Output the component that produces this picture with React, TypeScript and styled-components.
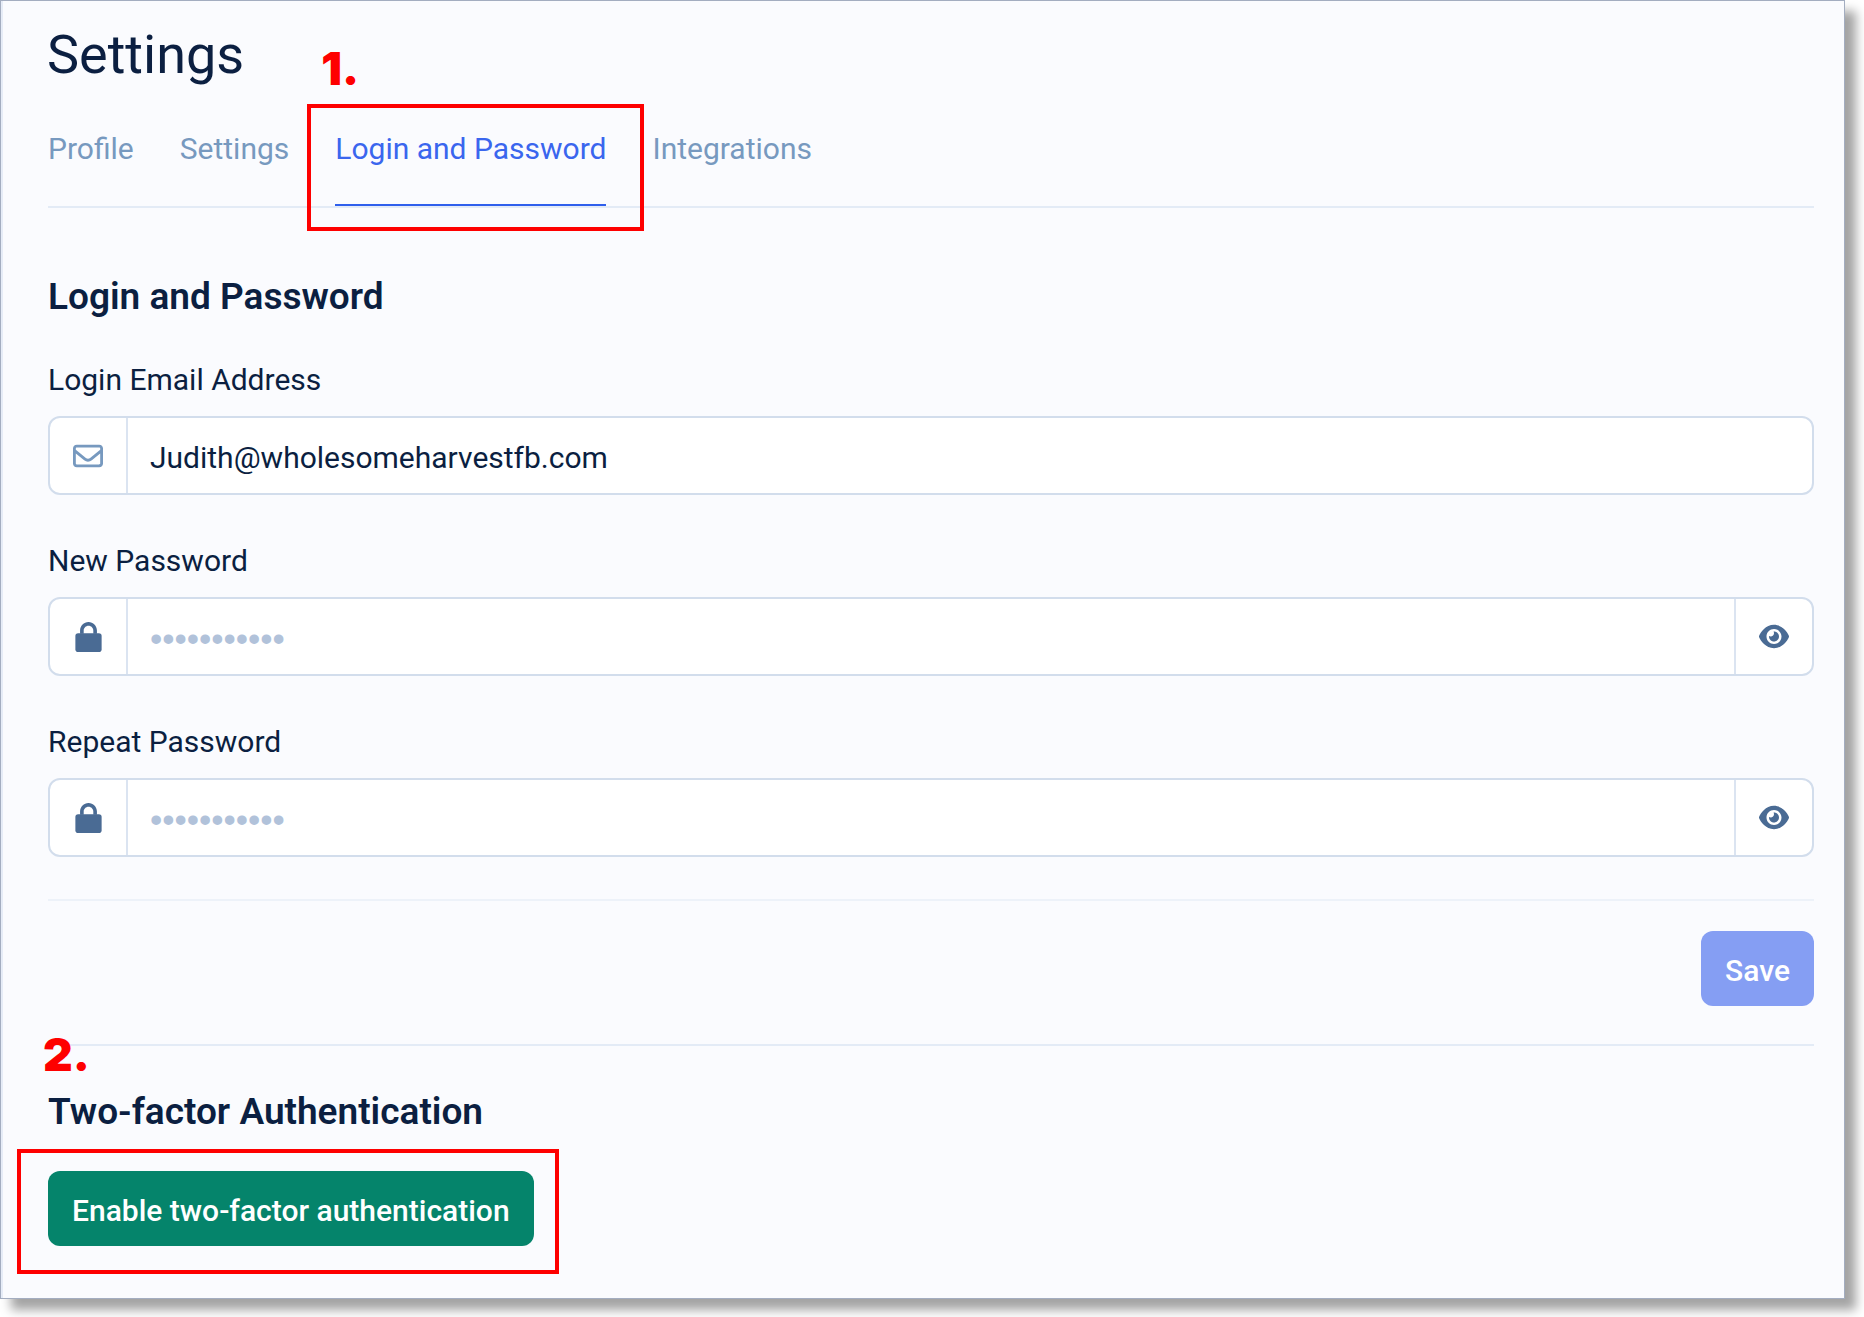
import React from 'react';
import styled, { createGlobalStyle } from 'styled-components';
import { FaRegEnvelope } from 'react-icons/fa6';

const GlobalStyle = createGlobalStyle`
  * { box-sizing: border-box; }
  body {
    margin: 0;
    background: #fff;
    color: #0b1f41;
    font-family: Roboto, "Liberation Sans", sans-serif;
    font-size: 30px;
    line-height: 36px;
  }
  h1, h2, p { margin: 0; }
  button, input { font: inherit; }
`;

const Card = styled.main`
  margin: 0 19px 19px 0;
  padding: 24px 30px 52px 44px;
  border: 1px solid #a3adc0;
  background: #fafbfe;
  box-shadow: inset 2px 0 0 #e6ecf7, 11px 11px 10px rgba(0, 0, 0, 0.36);
`;

const PageTitle = styled.h1`
  padding: 0 2px;
  font-size: 54px;
  line-height: 60px;
  font-weight: 400;
`;

const Tabs = styled.nav`
  display: flex;
  gap: 46px;
  margin-left: 3px;
  padding-top: 46px;
  border-bottom: 2px solid #e3ebf6;
`;

const Tab = styled.a<{ $active?: boolean }>`
  position: relative;
  height: 75px;
  color: ${(p) => (p.$active ? '#3a66ee' : '#7799bf')};
  border-bottom: 2px solid ${(p) => (p.$active ? '#2f5fec' : 'transparent')};
  text-decoration: none;
`;

const Section = styled.section<{ $top: number }>`
  padding: ${(p) => p.$top}px 0 0 3px;
`;

const SectionTitle = styled.h2`
  margin-bottom: 37px;
  font-size: 37px;
  line-height: 44px;
  font-weight: 600;
`;

const Fields = styled.div`
  display: flex;
  flex-direction: column;
  gap: 48px;
  padding: 6px 0 42px;
`;

const Field = styled.div`
  display: flex;
  flex-direction: column;
  gap: 18px;
`;

const InputGroup = styled.div`
  display: flex;
  height: 79px;
  border: 2px solid #d2ddec;
  border-radius: 12px;
  background: #fff;
  overflow: hidden;
`;

const Addon = styled.span<{ $color: string }>`
  display: flex;
  flex: none;
  align-items: center;
  justify-content: center;
  width: 78px;
  border-right: 2px solid #dbe4f1;
  color: ${(p) => p.$color};
`;

const Reveal = styled.button`
  display: flex;
  flex: none;
  align-items: center;
  justify-content: center;
  width: 78px;
  padding: 0;
  border: 0;
  border-left: 2px solid #dbe4f1;
  background: none;
  color: #4a6b94;
`;

const Input = styled.input`
  flex: 1;
  min-width: 0;
  padding: 4px 22px 0;
  border: 0;
  outline: 0;
  background: none;
  color: #0b1f41;
  &[type='password'] { padding-top: 8px; }
  &::placeholder {
    color: #b1c2da;
    opacity: 1;
    font-family: "Liberation Sans", sans-serif;
    font-size: 35px;
  }
`;

const Actions = styled.div`
  display: flex;
  justify-content: flex-end;
  padding: 30px 0 38px;
  border-top: 2px solid #edf2f9;
  border-bottom: 2px solid #e3ebf6;
`;

const Button = styled.button<{ $tone: string }>`
  height: 75px;
  padding: 4px 24px 0;
  border: 0;
  border-radius: 12px;
  background: ${(p) => p.$tone};
  color: #fff;
  font-weight: 500;
`;

const Marked = styled.div`
  position: relative;
  width: fit-content;
`;

const Outline = styled.span<{ $inset: string }>`
  position: absolute;
  inset: ${(p) => p.$inset};
  border: 4px solid #fe0000;
  pointer-events: none;
`;

const Step = styled.span<{ $left: number; $top: number }>`
  position: absolute;
  left: ${(p) => p.$left}px;
  top: ${(p) => p.$top}px;
  color: #fe0000;
  font-family: Inter, sans-serif;
  font-size: 46px;
  line-height: 46px;
  font-weight: 900;
`;

function LockIcon() {
  return (
    <svg width="27" height="30" viewBox="0 0 448 512" fill="currentColor" aria-hidden="true">
      <path d="M80 200V144C80 64.5 144.500 0 224 0s144 64.500 144 144v56h-62V144c0-45-36-82-82-82s-82 37-82 82v56z" />
      <rect y="190" width="448" height="322" rx="48" />
    </svg>
  );
}

function EyeIcon() {
  return (
    <svg width="30" height="27" viewBox="0 0 576 512" fill="currentColor" aria-hidden="true">
      <path d="M279.6 160.4C282.4 160.1 285.2 160 288 160C341 160 384 202.1 384 256C384 309 341 352 288 352C234.1 352 192 309 192 256C192 253.2 192.1 250.4 192.4 247.6C201.7 252.1 212.5 256 224 256C259.3 256 288 227.3 288 192C288 180.5 284.1 169.7 279.6 160.4zM480.6 112.6C527.4 156 558.7 207.1 573.5 243.7C576.8 251.6 576.8 260.4 573.5 268.3C558.7 304 527.4 355.1 480.6 399.4C433.5 443.2 368.8 480 288 480C207.2 480 142.5 443.2 95.42 399.4C48.62 355.1 17.34 304 2.461 268.3C-.8205 260.4-.8205 251.6 2.461 243.7C17.34 207.1 48.62 156 95.42 112.6C142.5 68.84 207.2 32 288 32C368.8 32 433.5 68.84 480.6 112.6V112.6zM288 112C208.5 112 144 176.5 144 256C144 335.5 208.5 400 288 400C367.5 400 432 335.5 432 256C432 176.5 367.5 112 288 112z" />
    </svg>
  );
}

function PasswordField({ id, label }: { id: string; label: string }) {
  return (
    <Field>
      <label htmlFor={id}>{label}</label>
      <InputGroup>
        <Addon $color="#4a6b94"><LockIcon /></Addon>
        <Input id={id} type="password" placeholder="•••••••••••" />
        <Reveal type="button" aria-label={`Show ${label}`}><EyeIcon /></Reveal>
      </InputGroup>
    </Field>
  );
}

export default function App() {
  return (
    <>
      <GlobalStyle />
      <Card>
        <PageTitle>Settings</PageTitle>
        <Tabs>
          <Tab href="#profile">Profile</Tab>
          <Tab href="#settings">Settings</Tab>
          <Tab href="#login" $active>
            Login and Password
            <Outline $inset="-27px -38px -27px -28px" />
            <Step $left={-14} $top={-86}>1.</Step>
          </Tab>
          <Tab href="#integrations">Integrations</Tab>
        </Tabs>
        <Section $top={67}>
          <SectionTitle>Login and Password</SectionTitle>
          <Fields>
            <Field>
              <label htmlFor="email">Login Email Address</label>
              <InputGroup>
                <Addon $color="#7799bf"><FaRegEnvelope size={30} /></Addon>
                <Input id="email" type="email" defaultValue="Judith@wholesomeharvestfb.com" />
              </InputGroup>
            </Field>
            <PasswordField id="new-password" label="New Password" />
            <PasswordField id="repeat-password" label="Repeat Password" />
          </Fields>
          <Actions><Button type="submit" $tone="#859ef3">Save</Button></Actions>
        </Section>
        <Section $top={44}>
          <SectionTitle>Two-factor Authentication</SectionTitle>
          <Marked>
            <Button type="button" $tone="#05846b">Enable two-factor authentication</Button>
            <Outline $inset="-22px -25px -28px -31px" />
            <Step $left={-5} $top={-140}>2.</Step>
          </Marked>
        </Section>
      </Card>
    </>
  );
}
